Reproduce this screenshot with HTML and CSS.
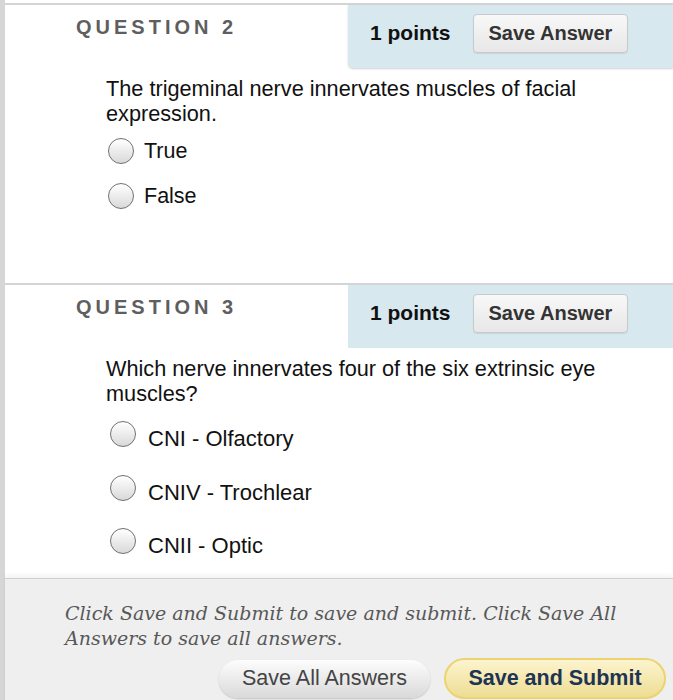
FILE: index.html
```html
<!DOCTYPE html>
<html lang="en">
<head>
<meta charset="utf-8">
<title>Questions</title>
<link rel="stylesheet" href="styles.css">
</head>
<body>
<div class="page">
  <section class="question q2">
    <div class="q-head">
      <h2 class="q-title">QUESTION 2</h2>
      <div class="q-points">
        <span class="points">1 points</span>
        <button class="save-btn">Save Answer</button>
      </div>
    </div>
    <div class="q-body">
      <p class="q-text">The trigeminal nerve innervates muscles of facial expression.</p>
      <ul class="choices">
        <li class="opt"><span class="radio"></span><span class="opt-label">True</span></li>
        <li class="opt"><span class="radio"></span><span class="opt-label">False</span></li>
      </ul>
    </div>
  </section>
  <section class="question q3">
    <div class="q-head">
      <h2 class="q-title">QUESTION 3</h2>
      <div class="q-points">
        <span class="points">1 points</span>
        <button class="save-btn">Save Answer</button>
      </div>
    </div>
    <div class="q-body">
      <p class="q-text">Which nerve innervates four of the six extrinsic eye muscles?</p>
      <ul class="choices choices-b">
        <li class="opt"><span class="radio"></span><span class="opt-label">CNI - Olfactory</span></li>
        <li class="opt"><span class="radio"></span><span class="opt-label">CNIV - Trochlear</span></li>
        <li class="opt"><span class="radio"></span><span class="opt-label">CNII - Optic</span></li>
      </ul>
    </div>
  </section>
  <footer class="submit-bar">
    <p class="submit-note">Click Save and Submit to save and submit. Click Save All Answers to save all answers.</p>
    <div class="submit-actions">
      <button class="btn-all">Save All Answers</button>
      <button class="btn-submit">Save and Submit</button>
    </div>
  </footer>
</div>
</body>
</html>
```
FILE: styles.css
```css
html, body {
  margin: 0;
  padding: 0;
  background: #fff;
}
body {
  font-family: "Liberation Sans", Arial, sans-serif;
  color: #111;
  width: 673px;
  height: 700px;
  overflow: hidden;
}
.page {
  border-left: 5px solid #d6d6d6;
  padding-top: 3px;
  min-height: 697px;
}
.question {
  border-top: 2px solid #d4d4d4;
}
.q-head {
  display: flex;
  height: 63px;
}
.q-title {
  margin: 0;
  width: 343px;
  box-sizing: border-box;
  padding-left: 71px;
  padding-top: 10px;
  font-size: 20px;
  line-height: 24px;
  font-weight: bold;
  letter-spacing: 4px;
  color: #5e5e5e;
}
.q-points {
  flex: 1;
  display: flex;
  align-items: center;
  gap: 22px;
  padding-left: 22px;
  background: #d8e8ef;
  border-bottom-left-radius: 5px;
  box-shadow: 0 1px 2px rgba(0, 0, 0, 0.18);
}
.q3 .q-points {
  border-bottom-left-radius: 0;
  box-shadow: none;
}
.points {
  font-size: 21px;
  font-weight: bold;
  color: #111;
  margin-top: -8px;
}
.save-btn {
  font-family: "Liberation Sans", Arial, sans-serif;
  font-size: 20px;
  font-weight: bold;
  color: #333;
  height: 39px;
  padding: 0 15px;
  margin-top: -6px;
  border: 1px solid #c9c9c9;
  border-radius: 4px;
  background: linear-gradient(#f8f8f8, #e7e7e7);
  box-shadow: 0 1px 1px rgba(0, 0, 0, 0.08);
}
.q-body {
  padding-left: 101px;
  padding-top: 8px;
}
.q-text {
  margin: 0;
  font-size: 21.7px;
  line-height: 25px;
  color: #111;
  max-width: 540px;
}
.choices {
  list-style: none;
  margin: 12px 0 0 0;
  padding: 0 0 0 2px;
  display: flex;
  flex-direction: column;
  gap: 19px;
}
.q2 .choices {
  padding-bottom: 74px;
}
.opt {
  display: flex;
  align-items: center;
  height: 26px;
}
.radio {
  width: 26px;
  height: 26px;
  box-sizing: border-box;
  border-radius: 50%;
  border: 1.5px solid #707070;
  background: linear-gradient(#ffffff, #d9d9d9);
  box-shadow: inset 0 1px 1px rgba(255, 255, 255, 0.9);
  flex: none;
}
.opt-label {
  margin-left: 10px;
  font-size: 21.5px;
  line-height: 26px;
  color: #111;
}
.choices-b {
  margin-top: 15px;
  padding-left: 4px;
  gap: 22.5px;
  padding-bottom: 19px;
}
.choices-b .opt {
  align-items: flex-start;
  height: 31px;
}
.choices-b .opt-label {
  margin-left: 12px;
  padding-top: 5px;
  font-size: 22px;
}
.submit-bar {
  background: #efefef;
  border-top: 1px solid #cfcfcf;
  box-shadow: 0 -3px 4px rgba(0, 0, 0, 0.05);
  padding: 22px 7px 10px 60px;
}
.submit-note {
  margin: 0;
  font-family: "DejaVu Serif", Georgia, serif;
  font-style: italic;
  font-size: 19px;
  line-height: 25px;
  color: #585858;
  max-width: 580px;
}
.submit-actions {
  display: flex;
  justify-content: flex-end;
  align-items: center;
  gap: 14px;
  margin-top: 7px;
}
.btn-all {
  font-family: "Liberation Sans", Arial, sans-serif;
  font-size: 21.5px;
  color: #444;
  width: 211px;
  height: 38px;
  border: none;
  border-radius: 19px;
  background: linear-gradient(#fdfdfd, #d9d9d9);
  box-shadow: 0 1px 2px rgba(0, 0, 0, 0.2);
}
.btn-submit {
  font-family: "Liberation Sans", Arial, sans-serif;
  font-size: 21.5px;
  font-weight: bold;
  color: #1d3553;
  width: 222px;
  height: 41px;
  border: 2px solid #ecd36f;
  border-radius: 21px;
  background: linear-gradient(#fcf4cf, #eedd93);
}
```
